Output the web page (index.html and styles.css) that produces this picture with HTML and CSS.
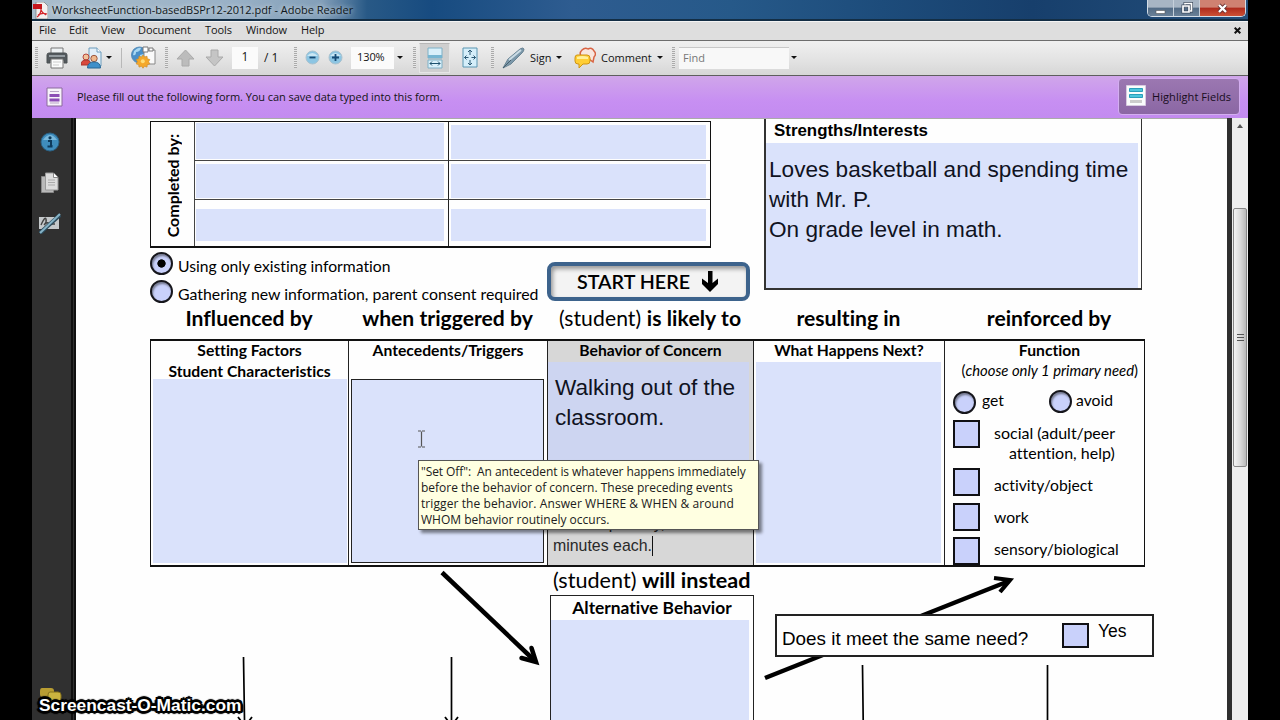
FILE: index.html
```html
<!DOCTYPE html>
<html lang="en">
<head>
<meta charset="utf-8">
<title>WorksheetFunction-basedBSPr12-2012.pdf - Adobe Reader</title>
<link rel="stylesheet" href="styles.css">
</head>
<body>
<div class="window">
  <header class="titlebar">
    <svg class="pdf-icon" width="15" height="17" viewBox="0 0 15 17"><path d="M3 0h8l4 4v13H3z" fill="#f4f0f0" stroke="#777" stroke-width=".7"/><path d="M0 2h9v5H0z" fill="#c5161c"/><path d="M4 15c3-2 4-5 4-8M5 13c3-2 6-2 9-1M8 8c1 3 3 4 5 5" fill="none" stroke="#d4262b" stroke-width="1.2"/></svg>
    <span class="title">WorksheetFunction-basedBSPr12-2012.pdf - Adobe Reader</span>
    <div class="controls">
      <span class="ctl"><svg width="11" height="13" viewBox="0 0 11 13"><path d="M1 8.500h9v3H1z" fill="#fff" stroke="#555" stroke-width=".6"/></svg></span>
      <span class="ctl"><svg width="12" height="12" viewBox="0 0 12 12"><path d="M4 3V1.500h6.500V9H9M2 4h6v6H2z" fill="none" stroke="#3c4a5c" stroke-width="3"/><path d="M4 2.500v-1h6.500V9H9M2 4h6v6H2z" fill="none" stroke="#fff" stroke-width="1.700"/></svg></span>
      <span class="ctl close"><svg width="11" height="11" viewBox="0 0 11 11"><path d="M2 2l7 7M9 2L2 9" stroke="#663030" stroke-width="4"/><path d="M2 2l7 7M9 2L2 9" stroke="#fff" stroke-width="2.400"/></svg></span>
    </div>
  </header>
  <nav class="menubar">
    <span class="m-file">File</span><span class="m-edit">Edit</span><span class="m-view">View</span><span class="m-doc">Document</span><span class="m-tools">Tools</span><span class="m-win">Window</span><span class="m-help">Help</span>
    <svg class="doc-close" width="7" height="7" viewBox="0 0 7 7"><path d="M.7.700l5.600 5.600M6.300.7L.7 6.300" stroke="#111" stroke-width="2"/></svg>
  </nav>
  <div class="toolbar">
    <i class="grip g1"></i>
    <svg class="t-print" width="22" height="22" viewBox="0 0 22 22"><path d="M5 1h12v7H5z" fill="#eef2f4" stroke="#777"/><path d="M1 8q0-2 2-2h16q2 0 2 2v8h-3v-3H4v3H1z" fill="#53595d" stroke="#4b5053"/><path d="M3 9h16" stroke="#a9b2b7" stroke-width="1.500"/><path d="M5 12h12v9H5z" fill="#fbfcfc" stroke="#777"/><path d="M7 15h8M7 18h6" stroke="#ccc"/></svg>
    <svg class="t-share" width="22" height="22" viewBox="0 0 22 22"><path d="M8 1h8l4 4v14H8z" fill="#e3eff8" stroke="#6d9cbc"/><path d="M16 1v4h4" fill="#fff" stroke="#6d9cbc"/><circle cx="5" cy="10" r="3" fill="#f0c39b" stroke="#b8453a"/><path d="M0 18q0-5 5-5t5 5z" fill="#d9483c" stroke="#a93329"/><circle cx="13" cy="11.500" r="3.200" fill="#efb88d" stroke="#9b5740"/><path d="M6.500 21q0-6 6.500-6t6.500 6z" fill="#3f8fc9" stroke="#286796"/></svg>
    <i class="caret c1"></i><i class="sep"></i>
    <svg class="t-globe" width="25" height="23" viewBox="0 0 25 23"><circle cx="8.500" cy="9" r="8" fill="#4a8fc8" stroke="#5d8fb8"/><path d="M3 5q4-4 7-3-1 4-5 4 0 4-3 3M9 9q5-2 6 2-3 5-6 3z" fill="#a9d8f2"/><path d="M13 4h11v14H13z" fill="#fafafa" stroke="#888"/><path d="M12 1h5v5h-5zM18 2h4v3h-4z" fill="#fff" stroke="#777"/><path d="M12 9l1.500 2 2.500-.8.300 2.600 2.500.7-1.200 2.200 1.200 2.200-2.500.7-.3 2.500-2.500-.8-1.500 1.900-1.500-1.900-2.500.8-.3-2.500-2.500-.7 1.200-2.200-1.200-2.200 2.500-.7.300-2.600 2.500.8z" fill="#f5a82a" stroke="#d08c2a" stroke-width=".7"/><circle cx="11.800" cy="15.300" r="2" fill="#ffdd77"/></svg>
    <i class="grip g2"></i>
    <svg class="t-up" width="19" height="18" viewBox="0 0 19 18"><path d="M9.500 1l8.500 9h-5v7H6v-7H1z" fill="#bcbcbc" stroke="#aaa"/></svg>
    <svg class="t-down" width="19" height="18" viewBox="0 0 19 18"><path d="M9.500 17l8.500-9h-5V1H6v7H1z" fill="#c5c5c5" stroke="#aaa"/></svg>
    <span class="page-no">1</span><span class="page-of">/ 1</span>
    <i class="grip g3"></i>
    <svg class="t-minus" width="15" height="15" viewBox="0 0 15 15"><circle cx="7.500" cy="7.500" r="6.500" fill="#8cc5e3" stroke="#a9c2cf"/><path d="M2 6q5-6 11 0z" fill="#c9e6f4"/><path d="M4.500 7.500h6" stroke="#164b76" stroke-width="1.800"/></svg>
    <svg class="t-plus" width="15" height="15" viewBox="0 0 15 15"><circle cx="7.500" cy="7.500" r="6.500" fill="#8cc5e3" stroke="#a9c2cf"/><path d="M2 6q5-6 11 0z" fill="#c9e6f4"/><path d="M4 7.500h7M7.500 4v7" stroke="#164b76" stroke-width="1.800"/></svg>
    <span class="zoom">130%</span><i class="caret c2"></i>
    <i class="grip g4"></i>
    <span class="fit"><svg width="16" height="22" viewBox="0 0 16 22"><path d="M1 1h14v10H1zM1 13h14v8H1z" fill="#d9f0fa" stroke="#7fb0c6"/><path d="M1 8h14v3H1z" fill="#76b6d2"/><path d="M3 16.500h10M5 14.500l-2 2 2 2M11 14.500l2 2-2 2" fill="none" stroke="#1d526f"/></svg></span>
    <svg class="t-fitpage" width="16" height="21" viewBox="0 0 16 21"><path d="M1 1h14v19H1z" fill="#d5eef9" stroke="#5b96b2"/><path d="M8 3v5M6 5l2-2 2 2M8 13v5M6 16l2 2 2-2M2.500 10.500h4M4.500 8.500l-2 2 2 2M13.500 10.500h-4M11.500 8.500l2 2-2 2" fill="none" stroke="#2b5873"/></svg>
    <i class="grip g5"></i>
    <svg class="t-pen" width="23" height="22" viewBox="0 0 23 22"><path d="M1 21L6 12 18 2q3-2 4 0 0 2-2 4L9 17z" fill="#7c98aa" stroke="#6a8494"/><path d="M7 13L19 3" stroke="#cbdce5" stroke-width="2"/><path d="M1 21l8-8" stroke="#465d6b"/></svg>
    <span class="sign">Sign</span><i class="caret c3"></i>
    <svg class="t-comment" width="22" height="22" viewBox="0 0 22 22"><path d="M8 3q3-3 6-1 4-2 6 2 3 3 0 6l-1 5-4-3q-7 1-8-3-2-3 1-6z" fill="#f8e6df" stroke="#d86343" stroke-width="1.500"/><path d="M3 8h10q3 0 3 3v3q0 3-3 3H9l-4 4v-4H4q-3 0-3-3v-3q0-3 2-3z" fill="#ffce35" stroke="#cf9412"/><path d="M3 10q5-2 11 0v2H3z" fill="#fff09a"/></svg>
    <span class="comment">Comment</span><i class="caret c4"></i>
    <i class="grip g6"></i>
    <span class="find">Find</span><i class="caret c5"></i>
  </div>
  <div class="notice">
    <svg class="form-icon" width="18" height="21" viewBox="0 0 18 21"><path d="M1 1h15v18H1z" fill="#f7f2fa" stroke="#8a6a9c"/><path d="M4 4.500h9M4 16h9" stroke="#b9a5c5"/><path d="M3.500 7h10v3h-10zM3.500 11.500h10v3h-10z" fill="#8c4db5"/></svg>
    <span class="notice-text">Please fill out the following form. You can save data typed into this form.</span>
    <button class="highlight"><svg width="20" height="22" viewBox="0 0 20 22"><path d="M.5.500h19v20H.5z" fill="#fafcfc" stroke="#d8cbe0"/><path d="M3.500 3.500h13v3h-13zM3.500 9.500h13v3h-13z" fill="#4cc6dc" stroke="#2a9fba"/><path d="M4 15h12v3H4z" fill="#ccc"/></svg><span>Highlight Fields</span></button>
  </div>
  <main class="workspace">
    <aside class="sidebar">
      <svg class="s-info" width="20" height="20" viewBox="0 0 20 20"><circle cx="10" cy="10" r="9" fill="#3f8dbd" stroke="#2b6285"/><path d="M3 8q7-10 14 0z" fill="#79b9dc"/><circle cx="10" cy="5.800" r="1.600" fill="#0d3a5c"/><path d="M8 9h3v5h1.500M7.500 14.500h5" fill="none" stroke="#0d3a5c" stroke-width="2"/></svg>
      <svg class="s-pages" width="18" height="22" viewBox="0 0 18 22"><path d="M.5 4.500h12v16H.5z" fill="#b9b9b9" stroke="#888"/><path d="M4.500 1h8l4.500 4.500V18H4.500z" fill="#dcdcdc" stroke="#999"/><path d="M12.500 1v4.500H17" fill="#fff" stroke="#888"/><path d="M7 8h7M7 10.500h7M7 13h7" stroke="#aaa"/></svg>
      <svg class="s-sign" width="23" height="21" viewBox="0 0 23 21"><path d="M1 4h20v12H1z" fill="#c4c8ca"/><path d="M3 12q4-9 5-6t-2 6q4-4 5-1h6" fill="none" stroke="#444" stroke-width="1.400"/><path d="M2 20L22 2" stroke="#2c4c5e" stroke-width="4"/><path d="M2 20L22 1" stroke="#86b3c6" stroke-width="2"/></svg>
      <svg class="s-comments" width="23" height="18" viewBox="0 0 23 18"><path d="M3 1h9q3 0 3 3v3q0 3-3 3H3Q1 10 1 7V4q0-3 2-3z" fill="#b89d32"/><path d="M11 5h8q3 0 3 3v3q0 3-3 3h-8q-2 0-2-3V8q0-3 2-3z" fill="#cbb43f" stroke="#84701b"/></svg>
    </aside>
    <article class="page">
      <section class="top">
        <div class="left">
          <div class="completed">
            <div class="vlabel"><span>Completed by:</span></div>
            <div class="cells">
              <div class="cell r1"><i></i></div><div class="cell r1 b"><i></i></div>
              <div class="cell r2"><i></i></div><div class="cell r2 b"><i></i></div>
              <div class="cell r3"><i></i></div><div class="cell r3 b"><i></i></div>
            </div>
          </div>
          <div class="choices">
            <div class="radios">
              <div class="opt"><i class="radio on"></i><span class="o1">Using only existing information</span></div>
              <div class="opt"><i class="radio"></i><span class="o2">Gathering new information, parent consent required</span></div>
            </div>
            <div class="start"><span>START HERE</span><svg width="20" height="22" viewBox="0 0 20 22"><path d="M8 0h4.500v12l5.500-4.500v5.500L10 21 2 13V7.500L8 12z" fill="#000"/></svg></div>
          </div>
        </div>
        <div class="strengths">
          <h3>Strengths/Interests</h3>
          <p>Loves basketball and spending time<br>with Mr. P.<br>On grade level in math.</p>
        </div>
      </section>
      <section class="lead">
        <span><b>Influenced by</b></span><span><b>when triggered by</b></span><span class="l3">(student) <b>is likely to</b></span><span><b>resulting in</b></span><span class="l5"><b>reinforced by</b></span>
      </section>
      <section class="grid">
        <div class="col setting"><h4>Setting Factors<br>Student Characteristics</h4><div class="field"></div></div>
        <div class="col ante"><h4>Antecedents/Triggers</h4><div class="field"></div></div>
        <div class="col behav"><h4>Behavior of Concern</h4><div class="field">Walking out of the<br>classroom.</div><div class="detail"><span class="above">3 times per day, 5</span><span>minutes each.</span><i></i></div></div>
        <div class="col next"><h4>What Happens Next?</h4><div class="field"></div></div>
        <div class="col func"><h4>Function</h4>
          <p class="hint">(<em>choose only 1 primary need</em>)</p>
          <div class="pick"><i class="radio"></i><span class="get">get</span><i class="radio r"></i><span class="avoid">avoid</span></div>
          <div class="chk k1"><i class="box"></i><span>social (adult/peer<br><span class="f2">attention, help)</span></span></div>
          <div class="chk k2"><i class="box"></i><span>activity/object</span></div>
          <div class="chk k3"><i class="box"></i><span>work</span></div>
          <div class="chk k4"><i class="box"></i><span>sensory/biological</span></div>
        </div>
      </section>
      <section class="bottom">
        <div class="alt"><p>(student) <b>will instead</b></p><div class="altbox"><h4>Alternative Behavior</h4><div class="field"></div></div></div>
        <div class="need"><span class="q">Does it meet the same need?</span><i class="box"></i><span class="yes">Yes</span></div>
      </section>
      <svg class="arrows" width="1151" height="602" viewBox="76 118 1151 602" fill="none" stroke="#000">
        <path d="M442 572.500L535 661" stroke-width="4.500"/><path d="M531.500 648l4.500 14-14.500-4" stroke-width="4.500" stroke-linecap="round"/>
        <path d="M765 678L1009 581" stroke-width="4.500"/><path d="M994 578l16 2-10 12" stroke-width="4.200"/>
        <path d="M243.500 657l1 63M451.500 657v63M862.500 665l.7 55M1047.500 665v55" stroke-width="1.700"/>
        <path d="M238 717l3 4M252 717l-3 4M445 717l3 4M458 717l-3 4" stroke-width="1.800"/>
      </svg>
      <svg class="ibeam" width="9" height="18" viewBox="0 0 9 18"><path d="M1 1h3M5 1h3M4.500 1.500v15M1 17h3M5 17h3" stroke="#555" stroke-width="1.200"/></svg>
      <div class="tip"><span class="t1">"Set Off":&nbsp; An antecedent is whatever happens immediately</span><span class="t2">before the behavior of concern. These preceding events</span><span class="t3">trigger the behavior. Answer WHERE &amp; WHEN &amp; around</span><span class="t4">WHOM behavior routinely occurs.</span></div>
    </article>
    <div class="scroll"><i class="up"></i><div class="thumb"><i></i><i></i><i></i></div></div>
  </main>
  <div class="mark">Screencast-O-Matic.com</div>
</div>
</body>
</html>
```
FILE: styles.css
```css
* { box-sizing: border-box; }
body { margin: 0; background: #000; overflow: hidden; }
svg { display: block; flex: none; }
p, h3, h4 { margin: 0; }
i { display: block; flex: none; font-style: normal; }
span { white-space: nowrap; }
.window { position: relative; width: 1216px; height: 720px; margin-left: 32px; display: flex; flex-direction: column; overflow: hidden; font: 11px "Open Sans", sans-serif; color: #141414; }

.titlebar { height: 21px; flex: none; display: flex; align-items: flex-start; background: linear-gradient(90deg, #a9bdcc 0, #99b1c6 200px, #839fb9 290px, #285986 335px, #174b80 400px, #2e5c90 540px, #265989 700px, #1d4c7b 850px, #173f6c 1000px, #234e7a 1216px); border-bottom: 2px solid #132e45; }
.pdf-icon { margin: 2px 0 0 1px; }
.title { margin-left: 4px; line-height: 20px; color: #101820; letter-spacing: -.01px; text-shadow: 0 0 5px #fff8, 0 0 7px #fff6; }
.controls { display: flex; margin-left: auto; margin-right: 2px; height: 17px; border: 1px solid #d3dde7; border-top: 0; border-radius: 0 0 5px 5px; overflow: hidden; }
.ctl { width: 26px; display: flex; justify-content: center; align-items: center; border-right: 1px solid #c6d0db; background: linear-gradient(#a7b5c4 0 45%, #526b85 50%, #6a8198); }
.ctl.close { width: 45px; border: 0; background: linear-gradient(#cf8171 0 45%, #ae2a1c 50%, #cc5135); }

.menubar { height: 20px; flex: none; display: flex; align-items: flex-start; background: #dedede; border-bottom: 1px solid #6d6d6d; border-top: 1px solid #f4f4f4; line-height: 15px; letter-spacing: -.1px; }
.m-file { margin-left: 7px; width: 30px; } .m-edit { width: 32px; } .m-view { width: 37px; } .m-doc { width: 67px; } .m-tools { width: 41px; } .m-win { width: 55px; }
.doc-close { margin: 5px 7px 0 auto; }

.toolbar { height: 35px; flex: none; display: flex; align-items: center; background: linear-gradient(#f0f0f0, #e2e2e2 60%, #d6d6d6); border-bottom: 1px solid #5e5e5e; padding-bottom: 1px; }
.grip { width: 3px; height: 21px; background: repeating-linear-gradient(#aaa 0 1px, #e8e8e8 1px 2px); }
.caret { width: 0; height: 0; border: 3px solid transparent; border-top: 3.500px solid #111; border-bottom: 0; }
.g1 { margin-left: 3px; } .t-print { margin-left: 8px; } .t-share { margin-left: 13px; } .c1 { margin-left: 3px; }
.sep { width: 1px; height: 20px; background: #b8b8b8; margin-left: 9px; } .t-globe { margin-left: 9px; } .g2 { margin-left: 9px; }
.t-up { margin-left: 8px; } .t-down { margin-left: 10px; }
.page-no { margin-left: 8px; width: 26px; height: 22px; background: #fbfbfb; line-height: 20px; text-align: center; font-size: 12px; }
.page-of { margin-left: 6px; width: 25px; font-size: 12px; }
.g3 { margin-left: 5px; }
.t-minus { margin-left: 8px; } .t-plus { margin-left: 8px; }
.zoom { margin-left: 8px; width: 43px; height: 22px; background: #fbfbfb; line-height: 20px; padding-left: 6px; letter-spacing: -.1px; }
.c2 { margin-left: 3px; } .g4 { margin-left: 10px; }
.fit { margin-left: 3px; width: 31px; height: 30px; display: flex; align-items: center; justify-content: center; background: #cfcfcf; border: 1px solid #e6e6e6; border-top-color: #b7b7b7; }
.t-fitpage { margin-left: 12px; } .g5 { margin-left: 13px; } .t-pen { margin-left: 8px; }
.sign { margin-left: 5px; width: 26px; } .t-comment { margin-left: 12px; } .comment { margin-left: 5px; width: 56px; } .g6 { margin-left: 9px; }
.find { margin-left: 4px; width: 110px; height: 22px; line-height: 20px; padding-left: 4px; background: #f8f8f8; border-top: 1px solid #c8c8c8; color: #777; } .c5 { margin-left: 2px; }

.notice { height: 42px; flex: none; display: flex; align-items: center; background: linear-gradient(#d0a6ea, #c78ff2 60%, #c38bf0); }
.form-icon { margin-left: 14px; }
.notice-text { margin-left: 13px; letter-spacing: -.06px; padding-bottom: 2px; }
.highlight { margin: 0 8px 2px auto; width: 122px; height: 37px; display: flex; align-items: center; gap: 6px; padding: 0 0 0 7px; font: inherit; letter-spacing: .07px; color: #180c20; background: linear-gradient(#9b77b1, #8b67a4); border: 1px solid #d3aef0; border-radius: 4px; }

.workspace { flex: 1; display: flex; min-height: 0; background: #2f2f2f; }
.sidebar { width: 44px; flex: none; background: #303030; border-right: 5px double #101010; display: flex; flex-direction: column; }
.s-info { margin: 14px 0 0 8px; } .s-pages { margin: 20px 0 0 9px; } .s-sign { margin: 19px 0 0 6px; } .s-comments { margin: 453px 0 0 7px; }
.page { position: relative; width: 1151px; flex: none; background: #fefefe; border-top: 1px solid #aaa; overflow: hidden; padding-left: 74px; font-family: Lato, sans-serif; font-variant-ligatures: none; color: #000; display: flex; flex-direction: column; }

.top { display: flex; height: 187px; flex: none; }
.left { width: 561px; padding-top: 2px; }
.completed { display: flex; height: 127px; border: 1px solid #111; border-bottom-width: 2px; }
.vlabel { width: 44px; border-right: 1px solid #444; display: flex; align-items: center; justify-content: center; padding-top: 3px; }
.vlabel span { writing-mode: vertical-rl; transform: rotate(180deg); font: bold 16px Lato; }
.cells { flex: 1; display: grid; grid-template-columns: 254px 1fr; grid-template-rows: 39px 39px 1fr; }
.cell { display: flex; border-bottom: 1px solid #444; border-right: 1px solid #222; padding: 1px 4px 1px 1px; }
.cell.b { border-right: 0; padding: 3px 4px 1px 2px; }
.cell.r2 { padding-top: 3px; } .cell.r3 { padding-top: 9px; padding-bottom: 5px; border-bottom: 0; }
.cell i { flex: 1; background: #dae2fb; }
.choices { display: flex; height: 58px; }
.radios { width: 397px; flex: none; padding-top: 4px; }
.opt { display: flex; height: 28px; align-items: flex-start; font-size: 15.700px; }
.opt span { margin: 4px 0 0 5px; line-height: 20px; }
.opt .o2 { font-size: 15.850px; }
.radio { width: 23px; height: 23px; border-radius: 50%; background: #c9d1fb; border: 2px solid #16161c; box-shadow: inset 1px 2px 2px #777c93; }
.radio.on { background: radial-gradient(circle, #000 0 3.800px, #c9d1fb 4.500px); }
.start { width: 203px; height: 39px; margin-top: 14px; flex: none; border: 4px solid #3d638c; border-radius: 8px; background: #f3f3f3; box-shadow: inset 2px 3px 4px #999; display: flex; align-items: center; padding-left: 26px; gap: 10px; font-size: 19.700px; font-weight: 600; }
.strengths { margin-left: 53px; width: 378px; height: 171px; border: 2px solid #333; border-right-width: 1px; border-top: 0; font-family: "Liberation Sans", sans-serif; }
.strengths h3 { height: 24px; line-height: 24px; padding-left: 8px; font-size: 16.900px; }
.strengths p { height: 145px; margin-right: 3px; padding: 12px 0 0 3px; background: #dae2fb; font-size: 22.600px; line-height: 30px; white-space: nowrap; color: #10131f; }

.lead, .grid { display: grid; grid-template-columns: 198px 199px 206px 191px 200px; width: 995px; flex: none; }
.lead { height: 33px; line-height: 24px; text-align: center; font-size: 21.150px; }
.l3 { letter-spacing: .08px; }
.l5 { padding-left: 10px; }
.grid { height: 228px; border: 1px solid #111; border-width: 2px 1px 2px 1px; }
.col { border-right: 1px solid #222; display: flex; flex-direction: column; min-width: 0; }
.col:last-child { border-right: 0; }
h4 { font-size: 15.700px; line-height: 21px; text-align: center; flex: none; }
.col h4 { margin-top: -1px; padding-bottom: 1px; }
.col .field { flex: 1; background: #dae2fb; }
.setting .field { margin: -4px 1px 2px 2px; }
.ante h4 { height: 39px; } .ante .field { margin: 0 3px 2px 2px; border: 1px solid #222; }
.behav { background: #d7d7d7; }
.behav .field { flex: none; height: 135px; background: #cdd5f1; margin-right: 4px; padding: 11px 0 0 7px; font: 22.600px/30px "Liberation Sans", sans-serif; white-space: nowrap; color: #10131f; }
.detail { margin-top: -1px; padding: 18px 0 0 5px; font: 15.900px/20px "Liberation Sans", sans-serif; color: #292929; }
.detail .above { display: block; margin-bottom: 2px; }
.detail i { display: inline-block; width: 1px; height: 20px; background: #111; vertical-align: -5px; margin-top: -5px; }
.next .field { margin: 0 3px 2px 2px; }
.func h4 { padding-left: 9px; }
.hint { height: 20px; line-height: 17px; font-size: 14.850px; text-align: right; padding-right: 7px; white-space: nowrap; }
.func { font-size: 15.700px; }
.pick { display: flex; height: 28px; padding: 9px 0 0 8px; } .pick span { line-height: 20px; margin-left: 6px; margin-top: -1px; } .pick .get { width: 27px; } .pick .r { margin-left: 40px; margin-top: -1px; } .pick .avoid { margin-left: 4px; }
.pick, .chk { flex: none; }
.box { width: 27px; height: 28px; background: #c9d1fb; border: 2px solid #101014; }
.chk { display: flex; padding-left: 8px; line-height: 20px; height: 47px; margin-top: 10px; }
.chk > span { margin: 3px 0 0 14px; }
.chk.k1 { font-size: 16px; }
.chk.k2 { height: 35px; margin-top: 1px; } .chk.k3 { height: 34px; margin-top: 0; } .chk.k4 { height: 28px; margin-top: 0; }
.chk.k2 > span { margin-top: 7px; } .chk.k3 > span { margin-top: 4px; } .chk.k4 > span { margin-top: 2px; }
.f2 { margin-left: 15px; }

.bottom { display: flex; flex: 1; align-items: flex-start; min-height: 0; }
.alt { margin-left: 400px; width: 204px; }
.alt p { height: 28px; line-height: 26px; font-size: 21.600px; padding-left: 3px; white-space: nowrap; }
.altbox { border: 1px solid #222; border-bottom: 0; height: 130px; }
.altbox h4 { height: 24px; line-height: 23px; font-size: 17.400px; }
.altbox .field { height: 110px; margin-right: 4px; background: #dae2fb; }
.need { margin: 47px 0 0 21px; width: 379px; height: 43px; border: 2px solid #222; display: flex; background: #fefefe; font-family: "Liberation Sans", sans-serif; position: relative; z-index: 1; }
.q { font-size: 18.850px; line-height: 45px; margin-left: 5px; width: 280px; } .need .box { margin-top: 7px; height: 25px; } .yes { font-size: 17.500px; line-height: 31px; margin-left: 9px; }
.arrows { position: absolute; left: 0; top: -1px; }
.ibeam { position: absolute; left: 341px; top: 311px; }
.tip { position: absolute; left: 342px; top: 341px; width: 341px; height: 70px; display: flex; flex-direction: column; padding: 3px 2px; border: 1px solid #555; background: #ffffe1; box-shadow: 3px 3px 3px #0007; font: 12px/16px "Open Sans", sans-serif; color: #202020; z-index: 2; }
.tip span { align-self: flex-start; }
.t1 { letter-spacing: -.08px; } .t3 { letter-spacing: .08px; }
.scroll { margin-left: 5px; width: 16px; background: #eee; display: flex; flex-direction: column; align-items: center; }
.scroll .up { margin-top: 6px; border: 3px solid transparent; border-bottom: 4px solid #555; border-top: 0; }
.thumb { margin-top: 80px; width: 14px; height: 259px; border: 1px solid #888; border-radius: 2px; background: linear-gradient(90deg, #f4f4f4, #ddd 50%, #b9b9b9); display: flex; flex-direction: column; align-items: center; justify-content: center; gap: 2px; }
.thumb i { width: 7px; height: 1px; background: #555; }
.mark { position: absolute; left: 7px; top: 695px; font: bold 17.350px/20px "Liberation Sans", sans-serif; color: #fff; white-space: nowrap; text-shadow: 2px 0 #000, -2px 0 #000, 0 2px #000, 0 -2px #000, 2px 2px #000, -2px 2px #000, 2px -2px #000, -2px -2px #000, 3px 1px 1px #000, -3px 1px 1px #000, 0 3px 1px #000, 0 -3px 1px #000; }
```
